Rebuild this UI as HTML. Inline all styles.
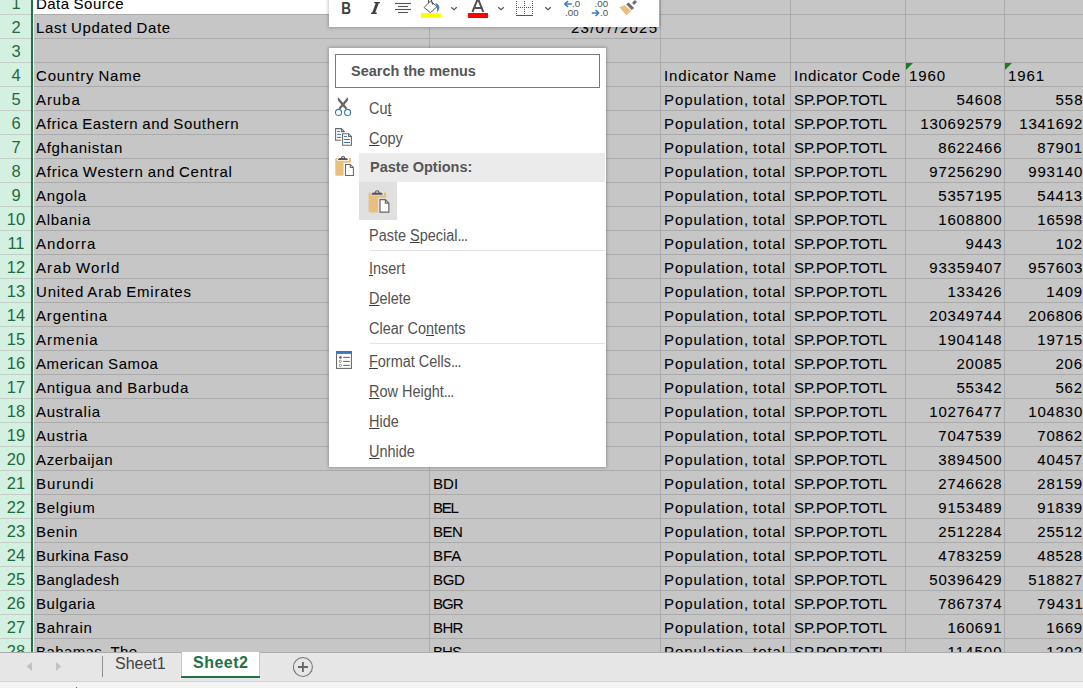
<!DOCTYPE html>
<html><head><meta charset="utf-8">
<style>
html,body{margin:0;padding:0;}
body{width:1083px;height:688px;overflow:hidden;position:relative;background:#c6c6c6;font-family:"Liberation Sans",sans-serif;}
#grid{position:absolute;left:0;top:0;width:1083px;height:652px;overflow:hidden;}
.rhbg{position:absolute;left:0;top:0;width:31px;height:652px;background:#d3f0e0;}
.gline{position:absolute;left:31px;top:0;width:2px;height:652px;background:#217346;}
.a1{position:absolute;left:33px;top:0;width:396px;height:14px;background:#fff;}
.hl{position:absolute;left:34px;width:1049px;height:1px;background:#ababab;}
.rhl{position:absolute;left:0;width:31px;height:1px;background:#c2cfc7;}
.vl{position:absolute;top:0;width:1px;height:652px;background:#ababab;}
.t{position:absolute;height:24px;line-height:24px;font-size:15.0px;color:#000;white-space:nowrap;-webkit-text-stroke:0.08px #000;}
.r{text-align:right;}
.rh{position:absolute;left:0;width:32px;height:24px;line-height:24px;font-size:16.5px;color:#1f6b41;text-align:center;}
.tri{position:absolute;width:0;height:0;border-top:7px solid #1e7b1e;border-right:7px solid transparent;}
#tabs{position:absolute;left:0;top:652px;width:1083px;height:29px;background:#e6e6e6;}
#status{position:absolute;left:0;top:681px;width:1083px;height:7px;background:#f3f3f3;border-top:1px solid #d4d4d4;}
</style></head><body>
<div id="grid">
<div class="rhbg"></div>
<div class="a1"></div>
<div class="hl" style="top:14px"></div><div class="rhl" style="top:14px"></div><div class="hl" style="top:38px"></div><div class="rhl" style="top:38px"></div><div class="hl" style="top:62px"></div><div class="rhl" style="top:62px"></div><div class="hl" style="top:86px"></div><div class="rhl" style="top:86px"></div><div class="hl" style="top:110px"></div><div class="rhl" style="top:110px"></div><div class="hl" style="top:134px"></div><div class="rhl" style="top:134px"></div><div class="hl" style="top:158px"></div><div class="rhl" style="top:158px"></div><div class="hl" style="top:182px"></div><div class="rhl" style="top:182px"></div><div class="hl" style="top:206px"></div><div class="rhl" style="top:206px"></div><div class="hl" style="top:230px"></div><div class="rhl" style="top:230px"></div><div class="hl" style="top:254px"></div><div class="rhl" style="top:254px"></div><div class="hl" style="top:278px"></div><div class="rhl" style="top:278px"></div><div class="hl" style="top:302px"></div><div class="rhl" style="top:302px"></div><div class="hl" style="top:326px"></div><div class="rhl" style="top:326px"></div><div class="hl" style="top:350px"></div><div class="rhl" style="top:350px"></div><div class="hl" style="top:374px"></div><div class="rhl" style="top:374px"></div><div class="hl" style="top:398px"></div><div class="rhl" style="top:398px"></div><div class="hl" style="top:422px"></div><div class="rhl" style="top:422px"></div><div class="hl" style="top:446px"></div><div class="rhl" style="top:446px"></div><div class="hl" style="top:470px"></div><div class="rhl" style="top:470px"></div><div class="hl" style="top:494px"></div><div class="rhl" style="top:494px"></div><div class="hl" style="top:518px"></div><div class="rhl" style="top:518px"></div><div class="hl" style="top:542px"></div><div class="rhl" style="top:542px"></div><div class="hl" style="top:566px"></div><div class="rhl" style="top:566px"></div><div class="hl" style="top:590px"></div><div class="rhl" style="top:590px"></div><div class="hl" style="top:614px"></div><div class="rhl" style="top:614px"></div><div class="hl" style="top:638px"></div><div class="rhl" style="top:638px"></div><div class="vl" style="left:429px"></div><div class="vl" style="left:660px"></div><div class="vl" style="left:790px"></div><div class="vl" style="left:905px"></div><div class="vl" style="left:1004px"></div>
<div class="gline"></div><div style="position:absolute;left:33px;top:0;width:1px;height:652px;background:#fff"></div>
<div class="rh" style="top:-8.8px">1</div><div class="t" style="top:-8.0px;left:36px;letter-spacing:0.473px;word-spacing:-0.617px">Data Source</div><div class="rh" style="top:15.2px">2</div><div class="t" style="top:16.0px;left:36px;letter-spacing:0.665px;word-spacing:-0.808px">Last Updated Date</div><div class="t r" style="top:16.0px;right:424.79px;letter-spacing:1.210px">23/07/2025</div><div class="rh" style="top:39.2px">3</div><div class="rh" style="top:63.2px">4</div><div class="t" style="top:64.0px;left:36px;letter-spacing:0.836px;word-spacing:-0.979px">Country Name</div><div class="t" style="top:64.0px;left:433px;letter-spacing:0.651px">Country Code</div><div class="t" style="top:64.0px;left:664px;letter-spacing:0.869px;word-spacing:-1.012px">Indicator Name</div><div class="t" style="top:64.0px;left:794px;letter-spacing:0.715px;word-spacing:-0.858px">Indicator Code</div><div class="t" style="top:64.0px;left:909px;letter-spacing:0.906px">1960</div><div class="t" style="top:64.0px;left:1008px;letter-spacing:0.906px">1961</div><div class="tri" style="top:63px;left:906px"></div><div class="tri" style="top:63px;left:1005px"></div><div class="rh" style="top:87.2px">5</div><div class="t" style="top:88.0px;left:36px;letter-spacing:0.927px;word-spacing:-1.070px">Aruba</div><div class="t" style="top:88.0px;left:433px;letter-spacing:0.825px">ABW</div><div class="t" style="top:88.0px;left:664px;letter-spacing:0.909px;word-spacing:-1.052px">Population, total</div><div class="t" style="top:88.0px;left:794px;letter-spacing:-0.106px;word-spacing:-0.037px">SP.POP.TOTL</div><div class="t r" style="top:88.0px;right:80.65px;letter-spacing:0.849px">54608</div><div class="t r" style="top:88.0px;right:-18.63px;letter-spacing:1.127px">55811</div><div class="rh" style="top:111.2px">6</div><div class="t" style="top:112.0px;left:36px;letter-spacing:0.633px;word-spacing:-0.776px">Africa Eastern and Southern</div><div class="t" style="top:112.0px;left:433px;letter-spacing:-1.001px">AFE</div><div class="t" style="top:112.0px;left:664px;letter-spacing:0.909px;word-spacing:-1.052px">Population, total</div><div class="t" style="top:112.0px;left:794px;letter-spacing:-0.106px;word-spacing:-0.037px">SP.POP.TOTL</div><div class="t r" style="top:112.0px;right:80.74px;letter-spacing:0.764px">130692579</div><div class="t r" style="top:112.0px;right:-18.26px;letter-spacing:0.764px">134169237</div><div class="rh" style="top:135.2px">7</div><div class="t" style="top:136.0px;left:36px;letter-spacing:0.700px;word-spacing:-0.843px">Afghanistan</div><div class="t" style="top:136.0px;left:433px;letter-spacing:-0.564px">AFG</div><div class="t" style="top:136.0px;left:664px;letter-spacing:0.909px;word-spacing:-1.052px">Population, total</div><div class="t" style="top:136.0px;left:794px;letter-spacing:-0.106px;word-spacing:-0.037px">SP.POP.TOTL</div><div class="t r" style="top:136.0px;right:80.71px;letter-spacing:0.793px">8622466</div><div class="t r" style="top:136.0px;right:-18.29px;letter-spacing:0.793px">8790140</div><div class="rh" style="top:159.2px">8</div><div class="t" style="top:160.0px;left:36px;letter-spacing:0.751px;word-spacing:-0.894px">Africa Western and Central</div><div class="t" style="top:160.0px;left:433px;letter-spacing:0.494px">AFW</div><div class="t" style="top:160.0px;left:664px;letter-spacing:0.909px;word-spacing:-1.052px">Population, total</div><div class="t" style="top:160.0px;left:794px;letter-spacing:-0.106px;word-spacing:-0.037px">SP.POP.TOTL</div><div class="t r" style="top:160.0px;right:80.72px;letter-spacing:0.777px">97256290</div><div class="t r" style="top:160.0px;right:-18.28px;letter-spacing:0.777px">99314028</div><div class="rh" style="top:183.2px">9</div><div class="t" style="top:184.0px;left:36px;letter-spacing:0.664px;word-spacing:-0.807px">Angola</div><div class="t" style="top:184.0px;left:433px;letter-spacing:-0.012px">AGO</div><div class="t" style="top:184.0px;left:664px;letter-spacing:0.909px;word-spacing:-1.052px">Population, total</div><div class="t" style="top:184.0px;left:794px;letter-spacing:-0.106px;word-spacing:-0.037px">SP.POP.TOTL</div><div class="t r" style="top:184.0px;right:80.71px;letter-spacing:0.793px">5357195</div><div class="t r" style="top:184.0px;right:-18.29px;letter-spacing:0.793px">5441333</div><div class="rh" style="top:207.2px">10</div><div class="t" style="top:208.0px;left:36px;letter-spacing:0.698px;word-spacing:-0.841px">Albania</div><div class="t" style="top:208.0px;left:433px;letter-spacing:-0.443px">ALB</div><div class="t" style="top:208.0px;left:664px;letter-spacing:0.909px;word-spacing:-1.052px">Population, total</div><div class="t" style="top:208.0px;left:794px;letter-spacing:-0.106px;word-spacing:-0.037px">SP.POP.TOTL</div><div class="t r" style="top:208.0px;right:80.71px;letter-spacing:0.793px">1608800</div><div class="t r" style="top:208.0px;right:-18.29px;letter-spacing:0.793px">1659800</div><div class="rh" style="top:231.2px">11</div><div class="t" style="top:232.0px;left:36px;letter-spacing:0.994px;word-spacing:-1.137px">Andorra</div><div class="t" style="top:232.0px;left:433px;letter-spacing:0.535px">AND</div><div class="t" style="top:232.0px;left:664px;letter-spacing:0.909px;word-spacing:-1.052px">Population, total</div><div class="t" style="top:232.0px;left:794px;letter-spacing:-0.106px;word-spacing:-0.037px">SP.POP.TOTL</div><div class="t r" style="top:232.0px;right:80.59px;letter-spacing:0.906px">9443</div><div class="t r" style="top:232.0px;right:-18.35px;letter-spacing:0.849px">10216</div><div class="rh" style="top:255.2px">12</div><div class="t" style="top:256.0px;left:36px;letter-spacing:1.083px;word-spacing:-1.226px">Arab World</div><div class="t" style="top:256.0px;left:433px;letter-spacing:-0.598px">ARB</div><div class="t" style="top:256.0px;left:664px;letter-spacing:0.909px;word-spacing:-1.052px">Population, total</div><div class="t" style="top:256.0px;left:794px;letter-spacing:-0.106px;word-spacing:-0.037px">SP.POP.TOTL</div><div class="t r" style="top:256.0px;right:80.72px;letter-spacing:0.777px">93359407</div><div class="t r" style="top:256.0px;right:-18.28px;letter-spacing:0.777px">95760348</div><div class="rh" style="top:279.2px">13</div><div class="t" style="top:280.0px;left:36px;letter-spacing:0.796px;word-spacing:-0.939px">United Arab Emirates</div><div class="t" style="top:280.0px;left:433px;letter-spacing:-1.093px">ARE</div><div class="t" style="top:280.0px;left:664px;letter-spacing:0.909px;word-spacing:-1.052px">Population, total</div><div class="t" style="top:280.0px;left:794px;letter-spacing:-0.106px;word-spacing:-0.037px">SP.POP.TOTL</div><div class="t r" style="top:280.0px;right:80.68px;letter-spacing:0.815px">133426</div><div class="t r" style="top:280.0px;right:-18.32px;letter-spacing:0.815px">140984</div><div class="rh" style="top:303.2px">14</div><div class="t" style="top:304.0px;left:36px;letter-spacing:0.851px;word-spacing:-0.994px">Argentina</div><div class="t" style="top:304.0px;left:433px;letter-spacing:-0.656px">ARG</div><div class="t" style="top:304.0px;left:664px;letter-spacing:0.909px;word-spacing:-1.052px">Population, total</div><div class="t" style="top:304.0px;left:794px;letter-spacing:-0.106px;word-spacing:-0.037px">SP.POP.TOTL</div><div class="t r" style="top:304.0px;right:80.72px;letter-spacing:0.777px">20349744</div><div class="t r" style="top:304.0px;right:-18.28px;letter-spacing:0.777px">20680653</div><div class="rh" style="top:327.2px">15</div><div class="t" style="top:328.0px;left:36px;letter-spacing:0.948px;word-spacing:-1.091px">Armenia</div><div class="t" style="top:328.0px;left:433px;letter-spacing:0.925px">ARM</div><div class="t" style="top:328.0px;left:664px;letter-spacing:0.909px;word-spacing:-1.052px">Population, total</div><div class="t" style="top:328.0px;left:794px;letter-spacing:-0.106px;word-spacing:-0.037px">SP.POP.TOTL</div><div class="t r" style="top:328.0px;right:80.71px;letter-spacing:0.793px">1904148</div><div class="t r" style="top:328.0px;right:-18.29px;letter-spacing:0.793px">1971530</div><div class="rh" style="top:351.2px">16</div><div class="t" style="top:352.0px;left:36px;letter-spacing:0.586px;word-spacing:-0.729px">American Samoa</div><div class="t" style="top:352.0px;left:433px;letter-spacing:0.596px">ASM</div><div class="t" style="top:352.0px;left:664px;letter-spacing:0.909px;word-spacing:-1.052px">Population, total</div><div class="t" style="top:352.0px;left:794px;letter-spacing:-0.106px;word-spacing:-0.037px">SP.POP.TOTL</div><div class="t r" style="top:352.0px;right:80.65px;letter-spacing:0.849px">20085</div><div class="t r" style="top:352.0px;right:-18.35px;letter-spacing:0.849px">20626</div><div class="rh" style="top:375.2px">17</div><div class="t" style="top:376.0px;left:36px;letter-spacing:0.723px;word-spacing:-0.866px">Antigua and Barbuda</div><div class="t" style="top:376.0px;left:433px;letter-spacing:0.240px">ATG</div><div class="t" style="top:376.0px;left:664px;letter-spacing:0.909px;word-spacing:-1.052px">Population, total</div><div class="t" style="top:376.0px;left:794px;letter-spacing:-0.106px;word-spacing:-0.037px">SP.POP.TOTL</div><div class="t r" style="top:376.0px;right:80.65px;letter-spacing:0.849px">55342</div><div class="t r" style="top:376.0px;right:-18.35px;letter-spacing:0.849px">56245</div><div class="rh" style="top:399.2px">18</div><div class="t" style="top:400.0px;left:36px;letter-spacing:0.706px;word-spacing:-0.849px">Australia</div><div class="t" style="top:400.0px;left:433px;letter-spacing:-0.472px">AUS</div><div class="t" style="top:400.0px;left:664px;letter-spacing:0.909px;word-spacing:-1.052px">Population, total</div><div class="t" style="top:400.0px;left:794px;letter-spacing:-0.106px;word-spacing:-0.037px">SP.POP.TOTL</div><div class="t r" style="top:400.0px;right:80.72px;letter-spacing:0.777px">10276477</div><div class="t r" style="top:400.0px;right:-18.28px;letter-spacing:0.777px">10483000</div><div class="rh" style="top:423.2px">19</div><div class="t" style="top:424.0px;left:36px;letter-spacing:0.785px;word-spacing:-0.928px">Austria</div><div class="t" style="top:424.0px;left:433px;letter-spacing:0.197px">AUT</div><div class="t" style="top:424.0px;left:664px;letter-spacing:0.909px;word-spacing:-1.052px">Population, total</div><div class="t" style="top:424.0px;left:794px;letter-spacing:-0.106px;word-spacing:-0.037px">SP.POP.TOTL</div><div class="t r" style="top:424.0px;right:80.71px;letter-spacing:0.793px">7047539</div><div class="t r" style="top:424.0px;right:-18.29px;letter-spacing:0.793px">7086299</div><div class="rh" style="top:447.2px">20</div><div class="t" style="top:448.0px;left:36px;letter-spacing:0.624px;word-spacing:-0.767px">Azerbaijan</div><div class="t" style="top:448.0px;left:433px;letter-spacing:-0.923px">AZE</div><div class="t" style="top:448.0px;left:664px;letter-spacing:0.909px;word-spacing:-1.052px">Population, total</div><div class="t" style="top:448.0px;left:794px;letter-spacing:-0.106px;word-spacing:-0.037px">SP.POP.TOTL</div><div class="t r" style="top:448.0px;right:80.71px;letter-spacing:0.793px">3894500</div><div class="t r" style="top:448.0px;right:-18.29px;letter-spacing:0.793px">4045750</div><div class="rh" style="top:471.2px">21</div><div class="t" style="top:472.0px;left:36px;letter-spacing:0.947px;word-spacing:-1.090px">Burundi</div><div class="t" style="top:472.0px;left:433px;letter-spacing:0.057px">BDI</div><div class="t" style="top:472.0px;left:664px;letter-spacing:0.909px;word-spacing:-1.052px">Population, total</div><div class="t" style="top:472.0px;left:794px;letter-spacing:-0.106px;word-spacing:-0.037px">SP.POP.TOTL</div><div class="t r" style="top:472.0px;right:80.71px;letter-spacing:0.793px">2746628</div><div class="t r" style="top:472.0px;right:-18.29px;letter-spacing:0.793px">2815981</div><div class="rh" style="top:495.2px">22</div><div class="t" style="top:496.0px;left:36px;letter-spacing:0.744px;word-spacing:-0.887px">Belgium</div><div class="t" style="top:496.0px;left:433px;letter-spacing:-1.247px">BEL</div><div class="t" style="top:496.0px;left:664px;letter-spacing:0.909px;word-spacing:-1.052px">Population, total</div><div class="t" style="top:496.0px;left:794px;letter-spacing:-0.106px;word-spacing:-0.037px">SP.POP.TOTL</div><div class="t r" style="top:496.0px;right:80.71px;letter-spacing:0.793px">9153489</div><div class="t r" style="top:496.0px;right:-18.29px;letter-spacing:0.793px">9183948</div><div class="rh" style="top:519.2px">23</div><div class="t" style="top:520.0px;left:36px;letter-spacing:0.741px;word-spacing:-0.884px">Benin</div><div class="t" style="top:520.0px;left:433px;letter-spacing:-0.489px">BEN</div><div class="t" style="top:520.0px;left:664px;letter-spacing:0.909px;word-spacing:-1.052px">Population, total</div><div class="t" style="top:520.0px;left:794px;letter-spacing:-0.106px;word-spacing:-0.037px">SP.POP.TOTL</div><div class="t r" style="top:520.0px;right:80.71px;letter-spacing:0.793px">2512284</div><div class="t r" style="top:520.0px;right:-18.29px;letter-spacing:0.793px">2551237</div><div class="rh" style="top:543.2px">24</div><div class="t" style="top:544.0px;left:36px;letter-spacing:0.414px;word-spacing:-0.557px">Burkina Faso</div><div class="t" style="top:544.0px;left:433px;letter-spacing:-0.092px">BFA</div><div class="t" style="top:544.0px;left:664px;letter-spacing:0.909px;word-spacing:-1.052px">Population, total</div><div class="t" style="top:544.0px;left:794px;letter-spacing:-0.106px;word-spacing:-0.037px">SP.POP.TOTL</div><div class="t r" style="top:544.0px;right:80.71px;letter-spacing:0.793px">4783259</div><div class="t r" style="top:544.0px;right:-18.29px;letter-spacing:0.793px">4852833</div><div class="rh" style="top:567.2px">25</div><div class="t" style="top:568.0px;left:36px;letter-spacing:0.427px;word-spacing:-0.570px">Bangladesh</div><div class="t" style="top:568.0px;left:433px;letter-spacing:-0.321px">BGD</div><div class="t" style="top:568.0px;left:664px;letter-spacing:0.909px;word-spacing:-1.052px">Population, total</div><div class="t" style="top:568.0px;left:794px;letter-spacing:-0.106px;word-spacing:-0.037px">SP.POP.TOTL</div><div class="t r" style="top:568.0px;right:80.72px;letter-spacing:0.777px">50396429</div><div class="t r" style="top:568.0px;right:-18.28px;letter-spacing:0.777px">51882769</div><div class="rh" style="top:591.2px">26</div><div class="t" style="top:592.0px;left:36px;letter-spacing:0.544px;word-spacing:-0.687px">Bulgaria</div><div class="t" style="top:592.0px;left:433px;letter-spacing:-0.964px">BGR</div><div class="t" style="top:592.0px;left:664px;letter-spacing:0.909px;word-spacing:-1.052px">Population, total</div><div class="t" style="top:592.0px;left:794px;letter-spacing:-0.106px;word-spacing:-0.037px">SP.POP.TOTL</div><div class="t r" style="top:592.0px;right:80.71px;letter-spacing:0.793px">7867374</div><div class="t r" style="top:592.0px;right:-18.48px;letter-spacing:0.978px">7943118</div><div class="rh" style="top:615.2px">27</div><div class="t" style="top:616.0px;left:36px;letter-spacing:0.671px;word-spacing:-0.814px">Bahrain</div><div class="t" style="top:616.0px;left:433px;letter-spacing:-0.617px">BHR</div><div class="t" style="top:616.0px;left:664px;letter-spacing:0.909px;word-spacing:-1.052px">Population, total</div><div class="t" style="top:616.0px;left:794px;letter-spacing:-0.106px;word-spacing:-0.037px">SP.POP.TOTL</div><div class="t r" style="top:616.0px;right:80.68px;letter-spacing:0.815px">160691</div><div class="t r" style="top:616.0px;right:-18.32px;letter-spacing:0.815px">166904</div><div class="rh" style="top:639.2px">28</div><div class="t" style="top:640.0px;left:36px;letter-spacing:0.401px;word-spacing:-0.544px">Bahamas, The</div><div class="t" style="top:640.0px;left:433px;letter-spacing:-0.946px">BHS</div><div class="t" style="top:640.0px;left:664px;letter-spacing:0.909px;word-spacing:-1.052px">Population, total</div><div class="t" style="top:640.0px;left:794px;letter-spacing:-0.106px;word-spacing:-0.037px">SP.POP.TOTL</div><div class="t r" style="top:640.0px;right:80.46px;letter-spacing:1.038px">114500</div><div class="t r" style="top:640.0px;right:-18.32px;letter-spacing:0.815px">120262</div>
</div>
<div id="tabs"></div>
<div id="status"></div>
<style>
#tb{position:absolute;left:329px;top:0;width:330px;height:27px;background:#fff;box-shadow:0 0 3px 1px rgba(0,0,0,0.22);}
#menu{position:absolute;left:329px;top:48px;width:277px;height:419px;background:#fff;box-shadow:0 0 3px 1px rgba(0,0,0,0.22);}
.mi{position:absolute;left:40px;height:30px;line-height:30px;font-size:15.8px;color:#525252;white-space:nowrap;transform:scaleX(0.915);transform-origin:0 0;}
.mi u{text-decoration:underline;text-decoration-color:#3b3b3b;text-underline-offset:1px;text-decoration-thickness:1px;}
.sep{position:absolute;left:41px;width:235px;height:1px;background:#e1e1e6;}
.abs{position:absolute;}
.dots{letter-spacing:-0.8px;}
</style>
<div id="tb">
 <svg class="abs" style="left:0;top:0" width="331" height="27" viewBox="0 0 331 27">
  <text x="0" y="0" font-family="Liberation Sans" font-weight="bold" font-size="16.6" fill="#404040" transform="translate(12.3 13.75) scale(0.82 1)">B</text>
  <path d="M45.3 1.9 H51.1 L50.8 3.3 H49.7 L46.3 12.5 H47.9 L47.6 13.95 H41.9 L42.2 12.5 H43.3 L46.7 3.3 H45.0 Z" fill="#404040"/>
  <g stroke="#555" stroke-width="1.1">
   <line x1="66" y1="3.5" x2="82" y2="3.5"/><line x1="69" y1="6.5" x2="79" y2="6.5"/>
   <line x1="66" y1="9.5" x2="82" y2="9.5"/><line x1="69" y1="12.5" x2="79" y2="12.5"/>
  </g>
  <!-- fill bucket -->
  <path d="M95.1 7.5 L101.5 1 L108.1 6.6 L101.4 12.7 Z" fill="none" stroke="#555" stroke-width="1"/>
  <path d="M99.5 0 L99.5 3.2 M102.3 0 L103.7 4.6" stroke="#555" stroke-width="1.1"/>
  <path d="M106.2 3 C110.2 4 112.3 7.8 108 12.6 C108.4 9.6 108.2 6.5 106.2 3 Z" fill="#3f7fc0"/>
  <rect x="92" y="13" width="20" height="5" fill="#ffff00"/>
  <polyline points="122.2,7.3 125,9.6 127.8,7.3" fill="none" stroke="#555" stroke-width="1.2"/>
  <!-- font color A -->
  <path d="M143.4 12 L148.9 -1.5 L154.3 12 M145.4 8 H152.4" fill="none" stroke="#505050" stroke-width="2"/>
  <rect x="139" y="13" width="20" height="5" fill="#ff0000"/>
  <polyline points="169.2,7.3 172,9.6 174.8,7.3" fill="none" stroke="#555" stroke-width="1.2"/>
  <!-- borders dotted -->
  <g fill="#555">
   <rect x="187" y="1" width="1" height="1"/><rect x="187" y="3" width="1" height="1"/><rect x="187" y="5" width="1" height="1"/><rect x="187" y="7" width="1" height="1"/><rect x="187" y="9" width="1" height="1"/><rect x="187" y="11" width="1" height="1"/><rect x="187" y="13" width="1" height="1"/>
   <rect x="195" y="1" width="1" height="1"/><rect x="195" y="3" width="1" height="1"/><rect x="195" y="5" width="1" height="1"/><rect x="195" y="9" width="1" height="1"/><rect x="195" y="11" width="1" height="1"/><rect x="195" y="13" width="1" height="1"/>
   <rect x="203" y="1" width="1" height="1"/><rect x="203" y="3" width="1" height="1"/><rect x="203" y="5" width="1" height="1"/><rect x="203" y="7" width="1" height="1"/><rect x="203" y="9" width="1" height="1"/><rect x="203" y="11" width="1" height="1"/><rect x="203" y="13" width="1" height="1"/>
   <rect x="189" y="7" width="1" height="1"/><rect x="191" y="7" width="1" height="1"/><rect x="193" y="7" width="1" height="1"/><rect x="195" y="7" width="1" height="1"/><rect x="197" y="7" width="1" height="1"/><rect x="199" y="7" width="1" height="1"/><rect x="201" y="7" width="1" height="1"/>
   <rect x="187" y="15" width="17" height="1"/>
  </g>
  <polyline points="216.2,7.3 219,9.6 221.8,7.3" fill="none" stroke="#555" stroke-width="1.2"/>
  <!-- increase decimal -->
  <path d="M235.5 4 L239 1.2 M235.5 4 L239 6.8 M235.5 4 H242.8" fill="none" stroke="#3f7fc0" stroke-width="1.6"/>
  <text x="243" y="6.9" font-family="Liberation Sans" font-size="9.8" fill="#555">.0</text>
  <text x="236" y="16.1" font-family="Liberation Sans" font-size="9.8" fill="#555">.00</text>
  <!-- decrease decimal -->
  <text x="265.5" y="6.9" font-family="Liberation Sans" font-size="9.8" fill="#555">.00</text>
  <path d="M270 13 L266.5 10.2 M270 13 L266.5 15.8 M270 13 H262.8" fill="none" stroke="#3f7fc0" stroke-width="1.6"/>
  <text x="271" y="16.1" font-family="Liberation Sans" font-size="9.8" fill="#555">.0</text>
  <!-- format painter -->
  <path d="M290.4 7.2 L295.7 5.3 L302.3 10.8 L297.3 15.2 Z" fill="#e8bf7c"/>
  <path d="M297.1 4.2 L299.6 2.5 L305.1 8 L302.6 10 Z" fill="#6f6f6f"/>
  <path d="M303 2.8 L306 0 L308 2 L305 5 Z" fill="#6f6f6f"/>
 </svg>
</div>
<div id="menu">
 <div class="abs" style="left:6px;top:6px;width:263px;height:32px;border:1px solid #7a7a7a;"></div>
 <div class="abs" style="left:22px;top:7px;height:32px;line-height:32px;font-size:14.5px;font-weight:bold;color:#555;white-space:nowrap;">Search the menus</div>
 <svg class="abs" style="left:3px;top:47px" width="24" height="24" viewBox="0 0 24 24">
  <path d="M5.8 2.7 Q6.3 2.3 6.9 2.9 L15.3 13.1 L13.7 14.4 L6.3 5.9 Q5.6 4.5 5.8 2.7 Z" fill="#666"/>
  <path d="M16.1 2.7 Q15.6 2.3 15.0 2.9 L6.6 13.1 L8.2 14.4 L15.6 5.9 Q16.3 4.5 16.1 2.7 Z" fill="#666"/>
  <circle cx="6.55" cy="17.45" r="3.05" fill="none" stroke="#3d75b8" stroke-width="1.1"/>
  <circle cx="15.6" cy="17.45" r="3.05" fill="none" stroke="#3d75b8" stroke-width="1.1"/>
 </svg>
 <div class="mi" style="top:46px">Cu<u>t</u></div>
 <svg class="abs" style="left:3px;top:77px" width="24" height="24" viewBox="0 0 24 24">
  <path d="M9 15.2 H3.6 V3.6 H9.4 L12.4 6.6" fill="none" stroke="#666" stroke-width="1.05"/>
  <path d="M9.4 3.6 V6.6 H12.4" fill="none" stroke="#666" stroke-width="1.05"/>
  <path d="M10.6 8.7 H16.6 L19.4 11.5 V20.2 H10.6 Z" fill="#fff" stroke="#666" stroke-width="1.05"/>
  <path d="M16.6 8.7 V11.5 H19.4" fill="none" stroke="#666" stroke-width="1.05"/>
  <g stroke="#3d75b8" stroke-width="1.05">
   <line x1="5.1" y1="6.45" x2="7.9" y2="6.45"/><line x1="5.1" y1="9.4" x2="8.9" y2="9.4"/><line x1="5.1" y1="12.4" x2="8.9" y2="12.4"/>
   <line x1="12" y1="11.45" x2="14.8" y2="11.45"/><line x1="12" y1="14.5" x2="18" y2="14.5"/><line x1="12" y1="17.45" x2="18" y2="17.45"/>
  </g>
 </svg>
 <div class="mi" style="top:76px"><u>C</u>opy</div>
 <svg class="abs" style="left:4px;top:106px" width="24" height="24" viewBox="0 0 24 24">
  <g id="pasteicon">
  <path d="M2.3 5 Q2.3 4 3.3 4 L4.2 4 L4.2 6.8 L16 6.8 L16 4 L17 4 Q18 4 18 5 L18 8.7 L10.6 8.7 L10.6 21.8 L3.6 21.8 Q2.3 21.8 2.3 20.5 Z" fill="#e8bf7c"/>
  <path d="M4.9 6.1 Q4.9 4.1 6.9 4.1 L12.9 4.1 Q14.9 4.1 14.9 6.1 Z" fill="#555"/>
  <path d="M8 4.3 L8 3.6 Q8 2.1 10 2.1 Q12 2.1 12 3.6 L12 4.3 Z" fill="#555"/>
  <ellipse cx="10" cy="3.6" rx="0.9" ry="0.6" fill="#fff"/>
  <path d="M12.5 10.4 H17.3 L20.4 13.5 V21.5 H12.5 Z" fill="#fff" stroke="#666" stroke-width="1.05"/>
  <path d="M17.3 10.4 V13.5 H20.4" fill="none" stroke="#666" stroke-width="1.05"/>
  </g>
 </svg>
 <div class="abs" style="left:30px;top:105px;width:246px;height:29px;background:#ebebeb;"></div>
 <div class="abs" style="left:41px;top:105px;height:29px;line-height:29px;font-size:14.5px;font-weight:bold;color:#555;white-space:nowrap;">Paste Options:</div>
 <div class="abs" style="left:30px;top:134px;width:38px;height:38px;background:#e0e0e0;"></div>
 <svg class="abs" style="left:37.3px;top:139.85px" width="27" height="27" viewBox="0 0 24.1 24.1">
  <use href="#pasteicon"/>
 </svg>
 <div class="mi" style="top:173px">Paste <u>S</u>pecial<span class="dots">...</span></div>
 <div class="sep" style="top:202px"></div>
 <div class="mi" style="top:206px"><u>I</u>nsert</div>
 <div class="mi" style="top:236px"><u>D</u>elete</div>
 <div class="mi" style="top:266px">Clear Co<u>n</u>tents</div>
 <div class="sep" style="top:295px"></div>
 <svg class="abs" style="left:3px;top:300px" width="24" height="24" viewBox="0 0 24 24">
  <rect x="4.5" y="3.5" width="14.9" height="16.9" fill="none" stroke="#666" stroke-width="1.05"/>
  <rect x="4" y="3" width="15.9" height="2.9" fill="#3d75b8"/>
  <circle cx="8.4" cy="9.4" r="1.3" fill="#666"/>
  <circle cx="8.4" cy="13.4" r="1.1" fill="none" stroke="#777" stroke-width="0.8"/>
  <circle cx="8.4" cy="17.4" r="1.1" fill="none" stroke="#777" stroke-width="0.8"/>
  <g stroke="#666" stroke-width="1.05"><line x1="11.2" y1="9.4" x2="17.8" y2="9.4"/><line x1="11.2" y1="13.4" x2="17.8" y2="13.4"/><line x1="11.2" y1="17.4" x2="17.8" y2="17.4"/></g>
 </svg>
 <div class="mi" style="top:299px"><u>F</u>ormat Cells<span class="dots">...</span></div>
 <div class="mi" style="top:329px"><u>R</u>ow Height<span class="dots">...</span></div>
 <div class="mi" style="top:359px"><u>H</u>ide</div>
 <div class="mi" style="top:389px"><u>U</u>nhide</div>
</div>
<div class="abs" style="left:0;top:652px;width:1083px;height:1px;background:#ababab;"></div>
<div class="abs" style="left:76px;top:687px;width:1px;height:1px;background:#555;"></div>
<svg class="abs" style="left:0;top:652px" width="1083" height="36" viewBox="0 652 1083 36">
 <path d="M26.5 666.5 L32 662 L32 671 Z" fill="#c2c2c2"/>
 <path d="M56 662 L61.2 666.5 L56 671 Z" fill="#c2c2c2"/>
 <rect x="102" y="656" width="1" height="21" fill="#8f8f8f"/>
 <circle cx="302.9" cy="667" r="9.5" fill="none" stroke="#777" stroke-width="1.1"/>
 <path d="M298 667 H307.9 M302.9 662 V671.9" stroke="#666" stroke-width="1.8"/>
</svg>
<div class="abs" style="left:181px;top:652px;width:79px;height:24px;background:#fff;border-left:1px solid #c8c8c8;border-right:1px solid #c8c8c8;box-sizing:border-box;"></div>
<div class="abs" style="left:181px;top:676px;width:79px;height:2px;background:#217346;"></div>
<div class="abs" style="left:115px;top:649px;height:29px;line-height:29px;font-size:16px;color:#444;white-space:nowrap;">Sheet1</div>
<div class="abs" style="left:193px;top:650px;height:26px;line-height:26px;font-size:16px;font-weight:bold;letter-spacing:0.5px;color:#217346;white-space:nowrap;">Sheet2</div>

</body></html>
